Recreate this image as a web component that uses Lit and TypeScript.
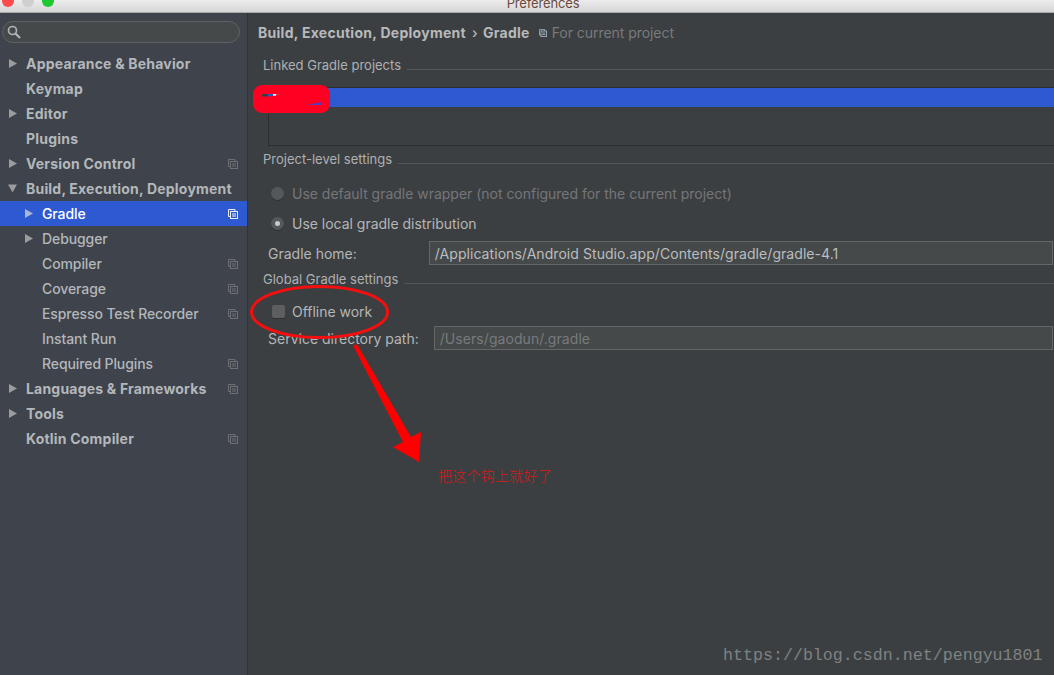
import { LitElement, html, css, svg } from "lit";
import { customElement } from "lit/decorators.js";

type Item = { label: string; level: 0 | 1; arrow?: "right" | "down"; copy?: boolean; selected?: boolean };

const ITEMS: Item[] = [
  { label: "Appearance & Behavior", level: 0, arrow: "right" },
  { label: "Keymap", level: 0 },
  { label: "Editor", level: 0, arrow: "right" },
  { label: "Plugins", level: 0 },
  { label: "Version Control", level: 0, arrow: "right", copy: true },
  { label: "Build, Execution, Deployment", level: 0, arrow: "down" },
  { label: "Gradle", level: 1, arrow: "right", copy: true, selected: true },
  { label: "Debugger", level: 1, arrow: "right" },
  { label: "Compiler", level: 1, copy: true },
  { label: "Coverage", level: 1, copy: true },
  { label: "Espresso Test Recorder", level: 1, copy: true },
  { label: "Instant Run", level: 1 },
  { label: "Required Plugins", level: 1, copy: true },
  { label: "Languages & Frameworks", level: 0, arrow: "right", copy: true },
  { label: "Tools", level: 0, arrow: "right" },
  { label: "Kotlin Compiler", level: 0, copy: true },
];

const copyIcon = () => html`<svg class="copy" viewBox="0 0 10 10" width="10" height="10" fill="none" stroke="currentColor" stroke-width="1">
  <path d="M2.5 7.5H.5V.5H7V2.5" />
  <rect x="2.5" y="2.5" width="7" height="7" />
  <path d="M4 5H8M4 7H8" />
</svg>`;

const arrowIcon = (d: "right" | "down") =>
  d === "right"
    ? html`<svg class="arrow right" viewBox="0 0 8 9" width="8" height="9"><path d="M0 0L8 4.5L0 9Z" fill="currentColor" /></svg>`
    : html`<svg class="arrow down" viewBox="0 0 9 9" width="9" height="9"><path d="M0 .5H9L4.5 8.5Z" fill="currentColor" /></svg>`;

@customElement("app-root")
export class AppRoot extends LitElement {
  static styles = css`
    :host {
      display: block;
      position: relative;
      width: 1054px;
      height: 675px;
      overflow: hidden;
      font-family: Inter, "Liberation Sans", sans-serif;
      font-size: 14px;
      color: #bbbbbb;
      background: #3c3f41;
    }
    .window { display: flex; flex-direction: column; height: 100%; }
    .titlebar {
      height: 12px;
      flex: none;
      background: linear-gradient(#ececec, #d6d6d6);
      border-bottom: 1px solid #a9a9a9;
      position: relative;
      overflow: hidden;
      display: flex;
      justify-content: center;
    }
    .title {
      font-size: 13px;
      line-height: 12px;
      margin-top: -3px;
      margin-left: 32px;
      color: #6b4a3c;
      letter-spacing: -0.15px;
    }
    .light { position: absolute; top: -5px; width: 12px; height: 12px; border-radius: 50%; }
    .light.red { left: 2px; background: #fc4b4b; }
    .light.grey { left: 22px; background: #cfcfcf; }
    .light.green { left: 42px; background: #1dc92e; }
    .body { flex: 1; display: flex; min-height: 0; }
    .sidebar {
      width: 247px;
      flex: none;
      background: #3e434c;
      border-right: 1px solid #303337;
      padding-top: 8px;
    }
    .search {
      margin: 0 7px 8px 2px;
      height: 20px;
      border: 1px solid #5e6264;
      border-radius: 11px;
      background: #45494a;
      display: flex;
      align-items: center;
      padding-left: 4px;
      color: #b0b2b4;
    }
    .row {
      height: 25px;
      display: flex;
      align-items: center;
      position: relative;
      color: #b4b7ba;
      font-size: 14px;
    }
    .row.top { font-weight: 700; padding-left: 26px; letter-spacing: 0.2px; }
    .row.sub { padding-left: 42px; letter-spacing: -0.1px; font-weight: 500; }
    .row.selected { background: #2d5ad0; color: #ffffff; }
    .arrow { position: absolute; top: 8px; color: #9a9c9e; }
    .top .arrow.right { left: 9px; }
    .top .arrow.down { left: 8px; }
    .sub .arrow { left: 25px; }
    .copy { position: absolute; left: 228px; top: 8px; color: #6d7073; }
    .selected .copy { color: #e8eefc; }
    .selected .arrow { color: #a9b6d8; }

    .main { flex: 1; min-width: 0; padding-left: 10px; }
    .crumbs {
      box-sizing: border-box;
      height: 42px;
      padding-bottom: 3px;
      display: flex;
      align-items: center;
      font-weight: 700;
      color: #b7b9bb;
      letter-spacing: 0.28px;
    }
    .crumbs .sep { margin: 0 5px 0 6px; font-weight: 500; }
    .crumbs .scope { display: flex; align-items: center; margin-left: 9px; font-weight: 400; color: #787a7c; letter-spacing: -0.05px; }
    .crumbs .copy { position: static; color: #a9bccb; width: 8px; height: 8px; margin-right: 5px; }
    .section {
      height: 20px;
      display: flex;
      align-items: center;
      padding-left: 5px;
      font-size: 13px;
      color: #aeb0b2;
    }
    .section .line { flex: 1; height: 1px; background: #53565a; margin: 8px 0 0 6px; }
    .list {
      margin: 12px 0 3px 10px;
      height: 57px;
      border-left: 1px solid #2b2d2f;
      border-bottom: 1px solid #2b2d2f;
      border-top: 1px solid #2b2d2f;
    }
    .list-sel { height: 19px; background: #2d5ad0; }
    .options { margin-top: 9px; }
    .opt {
      height: 30px;
      display: flex;
      align-items: center;
      padding-left: 13px;
      letter-spacing: -0.02px;
      color: #b4b6b8;
    }
    .opt.disabled { color: #74767a; }
    .radio {
      width: 13px;
      height: 13px;
      border-radius: 50%;
      background: #55585a;
      box-shadow: 0 1px 0 #2e3032;
      margin-right: 8px;
      display: flex;
      align-items: center;
      justify-content: center;
      flex: none;
    }
    .radio.on::after { content: ""; width: 5px; height: 5px; border-radius: 50%; background: #c6c8ca; }
    .box {
      width: 13px;
      height: 13px;
      border-radius: 2px;
      background: #5c5e60;
      box-shadow: 0 1px 0 #2e3032;
      margin-right: 7px;
      flex: none;
    }
    .field-row { display: flex; align-items: center; height: 24px; padding-left: 10px; color: #b4b6b8; }
    .field-row.home { margin-top: 3px; margin-bottom: 4px; }
    .field-row.service { margin-top: 3px; }
    .field {
      box-sizing: border-box;
      height: 24px;
      flex: 1;
      margin-right: 1px;
      border: 1px solid #646668;
      background: #45494a;
      display: flex;
      align-items: center;
      padding-left: 5px;
      letter-spacing: 0.06px;
    }
    .home .field { margin-left: 72px; color: #bbbdbf; }
    .service .field { margin-left: 15px; color: #787a7c; }
    .check-row { margin-top: 10px; height: 24px; display: flex; align-items: center; padding-left: 14px; letter-spacing: -0.02px; color: #b4b6b8; }

    .notes { position: absolute; left: 0; top: 0; pointer-events: none; }
    .note {
      position: absolute;
      left: 438px;
      top: 465px;
      font-family: "Noto Sans CJK SC", sans-serif;
      font-size: 14px;
      font-weight: 300;
      line-height: 20px;
      letter-spacing: 0.25px;
      color: #d81818;
    }
    .mark {
      position: absolute;
      left: 723px;
      top: 646px;
      font-family: "Liberation Mono", monospace;
      font-size: 16.65px;
      line-height: 20px;
      color: #7f8182;
      white-space: nowrap;
    }
  `;

  private row(i: Item) {
    const cls = `row ${i.level ? "sub" : "top"} ${i.selected ? "selected" : ""}`;
    return html`<div class=${cls}>
      ${i.arrow ? arrowIcon(i.arrow) : ""}<span>${i.label}</span>${i.copy ? copyIcon() : ""}
    </div>`;
  }

  render() {
    return html`
      <div class="window">
        <div class="titlebar">
          <span class="light red"></span><span class="light grey"></span><span class="light green"></span>
          <span class="title">Preferences</span>
        </div>
        <div class="body">
          <aside class="sidebar">
            <div class="search">
              <svg viewBox="0 0 14 14" width="14" height="14" fill="none" stroke="currentColor">
                <circle cx="5.5" cy="5.5" r="4" stroke-width="1.7" />
                <path d="M8.5 8.5L13 13" stroke-width="2.2" />
              </svg>
            </div>
            ${ITEMS.map((i) => this.row(i))}
          </aside>
          <main class="main">
            <div class="crumbs">
              <span>Build, Execution, Deployment</span><span class="sep">›</span><span>Gradle</span>
              <span class="scope">${copyIcon()}For current project</span>
            </div>
            <div class="section">Linked Gradle projects<span class="line"></span></div>
            <div class="list"><div class="list-sel"></div></div>
            <div class="section">Project-level settings<span class="line"></span></div>
            <div class="options">
              <div class="opt disabled"><span class="radio"></span>Use default gradle wrapper (not configured for the current project)</div>
              <div class="opt"><span class="radio on"></span>Use local gradle distribution</div>
            </div>
            <div class="field-row home">
              <span>Gradle home:</span>
              <div class="field">/Applications/Android Studio.app/Contents/gradle/gradle-4.1</div>
            </div>
            <div class="section">Global Gradle settings<span class="line"></span></div>
            <div class="check-row"><span class="box"></span>Offline work</div>
            <div class="field-row service">
              <span>Service directory path:</span>
              <div class="field">/Users/gaodun/.gradle</div>
            </div>
          </main>
        </div>
      </div>
      <svg class="notes" width="1054" height="675" viewBox="0 0 1054 675">
        ${svg`
          <rect x="253" y="85" width="77" height="28" rx="9" fill="#ff0022" />
          <path d="M262 94H268V96.5H262Z" fill="#3c3f41" />
          <path d="M268 94H273V96L268 96.5Z" fill="#3a50c0" />
          <path d="M273 94H276V95.7H273Z" fill="#f4e8ee" />
          <path d="M276 94H280L276 95.7Z" fill="#d04060" />
          <path d="M306 105L317 103L322 102V105Z" fill="#5a3ac0" />
          <ellipse cx="319.5" cy="312" rx="68" ry="25.5" fill="none" stroke="#f40f0f" stroke-width="3" />
          <path d="M353.5 346.5C354.5 344 357 344 358 346L411 437L421 432L419 462L393 447L403 442Z" fill="#fe0000" />
        `}
      </svg>
      <div class="note">把这个钩上就好了</div>
      <div class="mark">https://blog.csdn.net/pengyu1801</div>
    `;
  }
}
